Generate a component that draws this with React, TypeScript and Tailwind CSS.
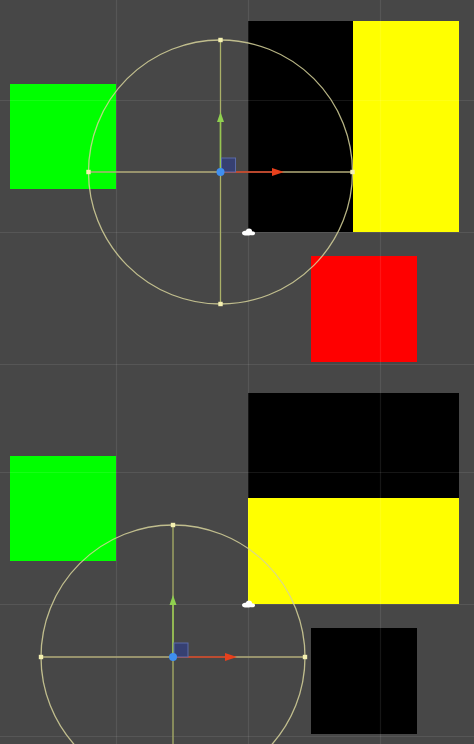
import React from "react";

type G = { cx: number; cy: number; gTip: number; rTip: number };

function Gizmo({ cx, cy, gTip, rTip }: G) {
  const r = 132;
  const h = 2.2;
  return (
    <g>
      <circle cx={cx} cy={cy} r={r} fill="none" stroke="#d6d29a" strokeOpacity={0.85} strokeWidth={1.3} />
      <line x1={cx - r} y1={cy} x2={cx + r} y2={cy} stroke="#b3ad7a" strokeWidth={1.3} />
      <line x1={cx} y1={cy - r} x2={cx} y2={cy + r} stroke="#aab068" strokeWidth={1.3} />
      <line x1={cx} y1={cy} x2={rTip - 8} y2={cy} stroke="#c8341e" strokeWidth={1.5} />
      <line x1={cx} y1={cy} x2={cx} y2={gTip + 8} stroke="#96c650" strokeWidth={1.5} />
      <polygon points={`${cx},${gTip} ${cx - 3.5},${gTip + 10} ${cx + 3.5},${gTip + 10}`} fill="#8fd14f" />
      <polygon points={`${rTip},${cy} ${rTip - 12},${cy - 4} ${rTip - 12},${cy + 4}`} fill="#e8401c" />
      <rect x={cx + 1} y={cy - 14} width={14} height={14} fill="#34407a" fillOpacity={0.85} stroke="#5a6aa8" strokeWidth={1} />
      <circle cx={cx} cy={cy} r={4} fill="#3f8ff0" />
      {[
        [cx - r, cy],
        [cx + r, cy],
        [cx, cy - r],
        [cx, cy + r],
      ].map(([x, y], i) => (
        <rect key={i} x={x - h} y={y - h} width={h * 2} height={h * 2} fill="#f4f0b0" />
      ))}
    </g>
  );
}

function Cloud({ x, y }: { x: number; y: number }) {
  return (
    <g fill="#ffffff">
      <ellipse cx={x - 1} cy={y + 1} rx={5} ry={2.6} />
      <ellipse cx={x + 1} cy={y - 1} rx={3} ry={2.6} />
      <ellipse cx={x + 4} cy={y + 1.2} rx={3} ry={2} />
    </g>
  );
}

function GridOverlay() {
  const vx = [116, 248, 380];
  const hy = [100, 232, 364];
  return (
    <>
      {vx.map((x) => (
        <line key={"v" + x} x1={x + 0.5} y1={0} x2={x + 0.5} y2={372} stroke="#ffffff" strokeOpacity={0.085} strokeWidth={1.2} />
      ))}
      {hy.map((y) => (
        <line key={"h" + y} x1={0} y1={y + 0.5} x2={474} y2={y + 0.5} stroke="#ffffff" strokeOpacity={0.085} strokeWidth={1.2} />
      ))}
    </>
  );
}

function Scene({ children, gizmo }: { children: React.ReactNode; gizmo: G }) {
  return (
    <div className="relative w-[474px] h-[372px] shrink-0">
      {children}
      <svg className="absolute inset-0 overflow-visible" width={474} height={372} viewBox="0 0 474 372">
        <GridOverlay />
        <Gizmo {...gizmo} />
        <Cloud x={248} y={232} />
      </svg>
    </div>
  );
}

export default function App() {
  return (
    <div className="flex flex-col w-[474px] h-[744px] overflow-hidden bg-[#474747]">
      <Scene gizmo={{ cx: 220.5, cy: 172, gTip: 112, rTip: 284 }}>
        <div className="absolute left-[10px] top-[84px] w-[106px] h-[105px] bg-[#00ff00]" />
        <div className="absolute left-[248px] top-[21px] w-[105px] h-[211px] bg-black" />
        <div className="absolute left-[353px] top-[21px] w-[106px] h-[211px] bg-[#ffff00]" />
        <div className="absolute left-[311px] top-[256px] w-[106px] h-[106px] bg-[#ff0000]" />
      </Scene>
      <Scene gizmo={{ cx: 173, cy: 285, gTip: 223, rTip: 237 }}>
        <div className="absolute left-[10px] top-[84px] w-[106px] h-[105px] bg-[#00ff00]" />
        <div className="absolute left-[248px] top-[21px] w-[211px] h-[105px] bg-black" />
        <div className="absolute left-[248px] top-[126px] w-[211px] h-[106px] bg-[#ffff00]" />
        <div className="absolute left-[311px] top-[256px] w-[106px] h-[106px] bg-black" />
      </Scene>
    </div>
  );
}
